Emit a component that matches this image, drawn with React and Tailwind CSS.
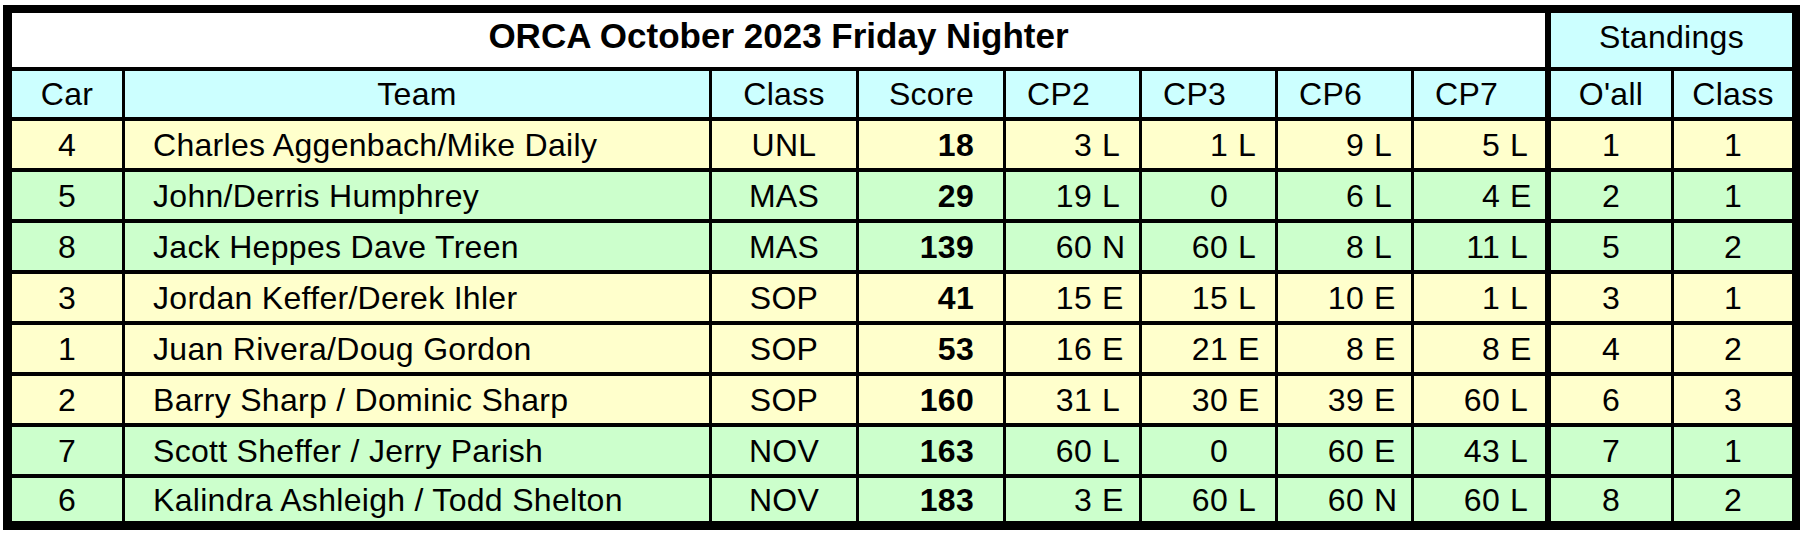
import React from "react";

const Y = "bg-[#ffffcc]";
const G = "bg-[#ccffcc]";

const rows = [
  { car: "4", team: "Charles Aggenbach/Mike Daily", cls: "UNL", score: "18", cp: [["3", "L"], ["1", "L"], ["9", "L"], ["5", "L"]], oall: "1", ccls: "1", bg: Y },
  { car: "5", team: "John/Derris Humphrey", cls: "MAS", score: "29", cp: [["19", "L"], ["0", ""], ["6", "L"], ["4", "E"]], oall: "2", ccls: "1", bg: G },
  { car: "8", team: "Jack Heppes Dave Treen", cls: "MAS", score: "139", cp: [["60", "N"], ["60", "L"], ["8", "L"], ["11", "L"]], oall: "5", ccls: "2", bg: G },
  { car: "3", team: "Jordan Keffer/Derek Ihler", cls: "SOP", score: "41", cp: [["15", "E"], ["15", "L"], ["10", "E"], ["1", "L"]], oall: "3", ccls: "1", bg: Y },
  { car: "1", team: "Juan Rivera/Doug Gordon", cls: "SOP", score: "53", cp: [["16", "E"], ["21", "E"], ["8", "E"], ["8", "E"]], oall: "4", ccls: "2", bg: Y },
  { car: "2", team: "Barry Sharp / Dominic Sharp", cls: "SOP", score: "160", cp: [["31", "L"], ["30", "E"], ["39", "E"], ["60", "L"]], oall: "6", ccls: "3", bg: Y },
  { car: "7", team: "Scott Sheffer / Jerry Parish", cls: "NOV", score: "163", cp: [["60", "L"], ["0", ""], ["60", "E"], ["43", "L"]], oall: "7", ccls: "1", bg: G },
  { car: "6", team: "Kalindra Ashleigh / Todd Shelton", cls: "NOV", score: "183", cp: [["3", "E"], ["60", "L"], ["60", "N"], ["60", "L"]], oall: "8", ccls: "2", bg: G },
];

const H = "bg-[#ccffff] flex items-center";

function CP({ n, l, bg, last }) {
  return (
    <div className={`${bg} flex items-center justify-end`}>
      <span>{n}</span>
      <span className={`${last ? "w-[45px]" : "w-[47px]"} pl-[10px] text-left`}>{l}</span>
    </div>
  );
}

export default function App() {
  return (
    <div className="bg-white w-[1804px] h-[534px] pt-[5px] pl-[3px] font-['Liberation_Sans',Arial,sans-serif] text-black text-[32px] tracking-[0.3px] leading-none">
      <div className="w-[1797px] bg-black pt-[8px] pl-[9px] pr-[8px] pb-[9px]">
        <div className="grid grid-cols-[110px_584px_144px_144px_133px_133px_133px_131px_0px_120px_118px] grid-rows-[54px_46px_47px_47px_47px_47px_47px_47px_47px_43px] gap-x-[3px] gap-y-[4px]">
          <div className="col-span-8 bg-white flex items-center justify-center pb-[10px] font-bold text-[35px] tracking-normal">
            ORCA October 2023 Friday Nighter
          </div>
          <div />
          <div className={`col-span-2 ${H} justify-center pb-[6px]`}>Standings</div>

          <div className={`${H} justify-center`}>Car</div>
          <div className={`${H} justify-center`}>Team</div>
          <div className={`${H} justify-center`}>Class</div>
          <div className={`${H} justify-end pr-[29px]`}>Score</div>
          <div className={`${H} pl-[21px]`}>CP2</div>
          <div className={`${H} pl-[21px]`}>CP3</div>
          <div className={`${H} pl-[21px]`}>CP6</div>
          <div className={`${H} pl-[21px]`}>CP7</div>
          <div />
          <div className={`${H} justify-center`}>O'all</div>
          <div className={`${H} justify-center`}>Class</div>

          {rows.map((r, i) => (
            <React.Fragment key={i}>
              <div className={`${r.bg} flex items-center justify-center`}>{r.car}</div>
              <div className={`${r.bg} flex items-center pl-[28px]`}>{r.team}</div>
              <div className={`${r.bg} flex items-center justify-center`}>{r.cls}</div>
              <div className={`${r.bg} flex items-center justify-end pr-[29px] font-bold`}>{r.score}</div>
              {r.cp.map((c, j) => (
                <CP key={j} n={c[0]} l={c[1]} bg={r.bg} last={j === 3} />
              ))}
              <div />
              <div className={`${r.bg} flex items-center justify-center`}>{r.oall}</div>
              <div className={`${r.bg} flex items-center justify-center`}>{r.ccls}</div>
            </React.Fragment>
          ))}
        </div>
      </div>
    </div>
  );
}
